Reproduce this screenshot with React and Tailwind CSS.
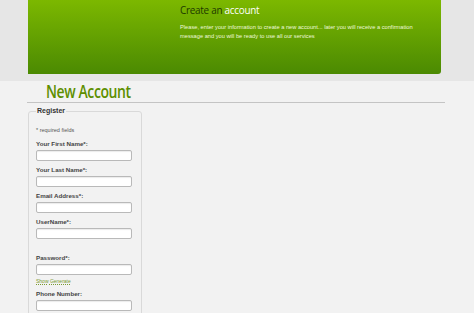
export default function App() {
  const fields = [
    { label: "Your First Name*:", mt: "mt-[6px]" },
    { label: "Your Last Name*:", mt: "mt-[5px]" },
    { label: "Email Address*:", mt: "mt-[5px]" },
    { label: "UserName*:", mt: "mt-[5px]" },
  ];
  const Input = () => (
    <div className="mt-[2px] h-[11px] w-[96px] bg-white border border-[#b9b9b9] rounded-[2px] shadow-[inset_0_1px_1px_rgba(0,0,0,0.08)]" />
  );
  return (
    <div className="w-[474px] h-[313px] overflow-hidden bg-[#f2f2f2] font-['Liberation_Sans',Arial,sans-serif]">
      <div className="h-[81px] bg-[#e6e6e6] pl-[28px]">
        <div className="w-[413px] h-[74px] rounded-br-[3px] bg-gradient-to-b from-[#7cb800] to-[#4b8a02] pl-[152px] pt-[3px]">
          <div className="origin-left scale-x-[0.86] whitespace-nowrap text-[11.5px] leading-[14px] font-['Open_Sans',sans-serif] tracking-[-0.3px]">
            <span className="text-[#1e3a00]">Create an </span>
            <span className="text-white">account</span>
          </div>
          <p className="mt-[6px] text-[5.7px] leading-[9px] text-[#eef8dc] w-[240px]">
            Please, enter your information to create a new account... later you will receive a confirmation message and you will be ready to use all our services
          </p>
        </div>
      </div>
      <div className="pl-[46px] h-[21px] whitespace-nowrap">
        <div className="origin-left scale-x-[0.8] text-[17.5px] leading-[20px] font-semibold text-[#5d8f00] font-['Open_Sans',sans-serif] tracking-[-0.5px]">
          New Account
        </div>
      </div>
      <div className="ml-[27px] w-[418px] h-[1px] bg-[#c4c4c4]" />
      <fieldset className="ml-[28px] mt-[3px] w-[113px] h-[220px] border border-[#d9d9d9] rounded-[3px] pl-[7px] pr-[9px]">
        <legend className="ml-0 px-[1px] text-[7px] font-bold text-[#333]">Register</legend>
        <div className="mt-[9px] text-[5.5px] leading-[8px] text-[#555]">* required fields</div>
        {fields.map((f) => (
          <div key={f.label} className={f.mt}>
            <div className="text-[6.2px] leading-[8px] font-bold text-[#444]">{f.label}</div>
            <Input />
          </div>
        ))}
        <div className="mt-[15px]">
          <div className="text-[6.2px] leading-[8px] font-bold text-[#444]">Password*:</div>
          <Input />
          <div className="mt-[3px] text-[5px] leading-[7px] text-[#7a9a30]">
            <span className="underline decoration-dotted">Show</span>{" "}
            <span className="underline decoration-dotted">Generate</span>
          </div>
        </div>
        <div className="mt-[5px]">
          <div className="text-[6.2px] leading-[8px] font-bold text-[#444]">Phone Number:</div>
          <Input />
        </div>
      </fieldset>
    </div>
  );
}
